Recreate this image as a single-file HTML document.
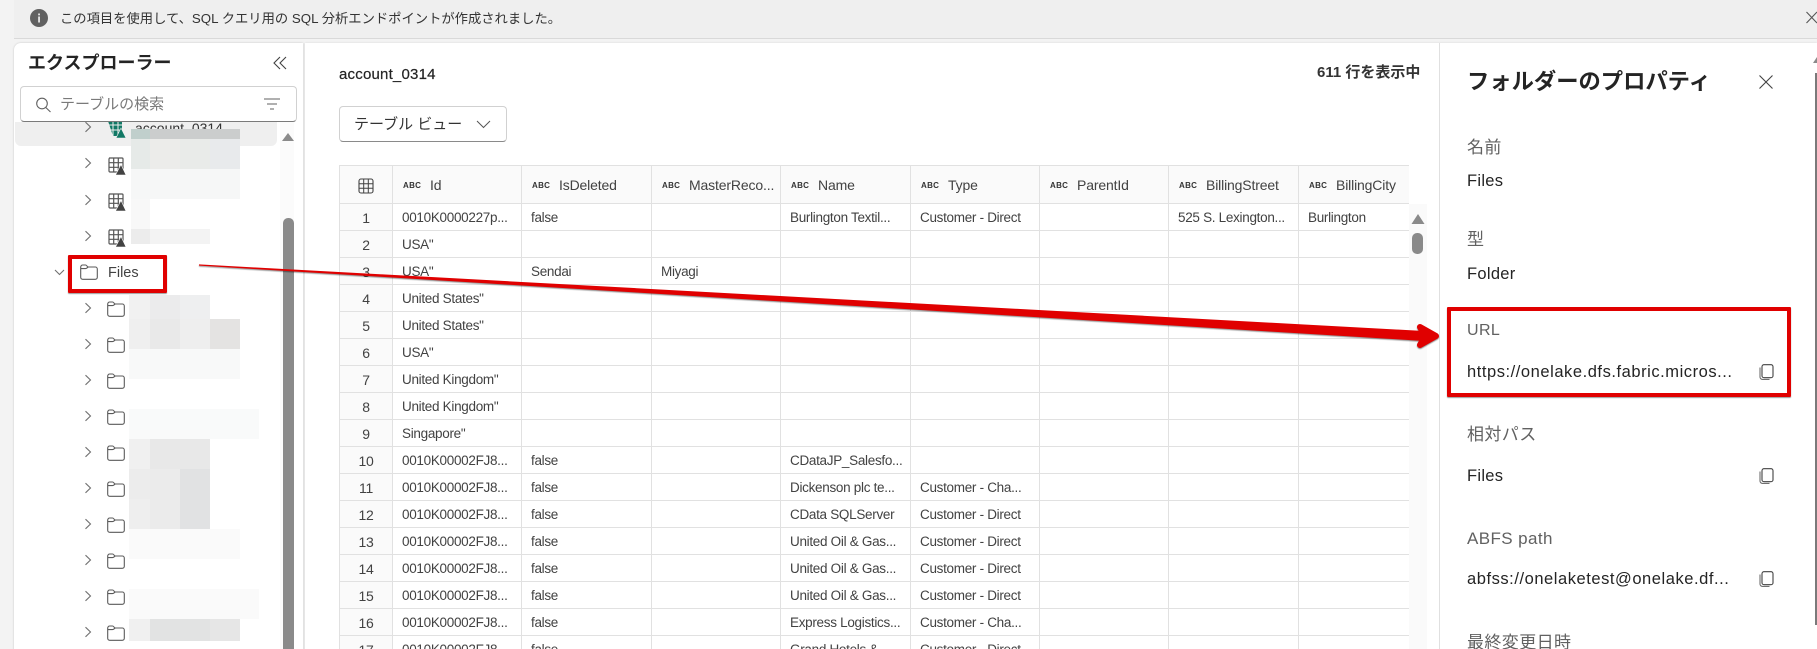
<!DOCTYPE html>
<html lang="ja"><head><meta charset="utf-8"><title>フォルダーのプロパティ</title>
<style>
html,body{margin:0;padding:0;width:1817px;height:649px;overflow:hidden}
#root{width:1817px;height:649px;position:relative;overflow:hidden;background:#f3f3f3;font-family:"Liberation Sans","Noto Sans CJK JP",sans-serif;color:#242424}
.a{position:absolute;white-space:nowrap}
#banner{left:14px;top:0;width:1803px;height:38px;background:#efefef;border-bottom:1px solid #d9d9d9}
#side{left:14px;top:43px;width:289px;height:620px;background:#fff;border-radius:7px 0 0 0;box-shadow:0 0 2px rgba(0,0,0,.18)}
#main{left:305px;top:43px;width:1512px;height:620px;background:#fff;box-shadow:0 0 2px rgba(0,0,0,.12)}
#search{left:20px;top:86px;width:275px;height:34px;background:#fff;border:1px solid #d1d1d1;border-bottom-color:#7a7a7a;border-radius:4px}
table{position:absolute;left:339px;top:165px;width:1069px;table-layout:fixed;border-collapse:collapse;font-size:13.5px;color:#424242;letter-spacing:-.3px}
th,td{border:1px solid #e1e1e1;padding:2px 0 0 9px;height:24px;line-height:24px;white-space:nowrap;overflow:hidden;text-align:left;font-weight:400}
tr:first-child th{height:35px;line-height:35px;background:#fafafa;padding:2px 0 0 10px;font-size:14px;letter-spacing:-.15px}
tr:first-child th:last-child,td:last-child{border-right:0}
td:first-child{background:#fafafa;text-align:center;padding:2px 0 0 0;font-size:14px}
th i{font:700 8px "Liberation Sans",sans-serif;letter-spacing:.3px;display:inline-block;width:27px;vertical-align:2px;color:#333}
.lb{font-size:17px;line-height:22px;letter-spacing:.4px;color:#616161;left:1467px}
.vl{font-size:16.5px;line-height:22px;letter-spacing:.3px;color:#242424;left:1467px}
</style></head><body><div id="root">
<svg width="0" height="0" style="position:absolute">
<symbol id="chev" viewBox="0 0 8 12"><path d="M1.5 1.2 6.5 6l-5 4.8" fill="none" stroke="#707070" stroke-width="1.1"/></symbol>
<symbol id="folder" viewBox="0 0 18 16"><path d="M.7 3A2 2 0 0 1 2.7 1H5.5C6.6 1 7 2.6 8.2 3H15.3A2 2 0 0 1 17.3 5V13.3A2 2 0 0 1 15.3 15.3H2.7A2 2 0 0 1 .7 13.3Z M.7 4.6H5.5C6.8 4.6 7.2 3.6 8.2 3" fill="none" stroke="#5a5a5a" stroke-width="1.1"/></symbol>
<symbol id="tbl" viewBox="0 0 18 18"><path d="M1.5 1H14a1 1 0 0 1 1 1V14a1 1 0 0 1-1 1H2A1 1 0 0 1 1 14V2ZM1 5.7H15M1 10.3H15M5.7 1V15M10.3 1V15" fill="none" stroke="#555" stroke-width="1.2"/><path d="M13 7.5 18 18H7.5Z" fill="#424242" stroke="#fff" stroke-width=".6"/></symbol>
<symbol id="copy" viewBox="0 0 15 16"><rect x="3" y=".7" width="11" height="13" rx="2" fill="none" stroke="#424242" stroke-width="1.1"/><path d="M1 3.5V13A2.4 2.4 0 0 0 3.4 15.4H10.5" fill="none" stroke="#707070" stroke-width="1.1"/></symbol>
</svg>

<div class="a" id="banner"></div>
<svg class="a" style="left:29px;top:8px" width="20" height="20"><circle cx="10" cy="10" r="9" fill="#616161"/><rect x="9.2" y="8.5" width="1.7" height="6" fill="#eee"/><rect x="9.2" y="5.5" width="1.7" height="1.8" fill="#eee"/></svg>
<div class="a" style="left:60px;top:10px;font-size:13.3px;line-height:18px;color:#333">この項目を使用して、SQL クエリ用の SQL 分析エンドポイントが作成されました。</div>
<svg class="a" style="left:1806px;top:11px" width="11" height="13"><path d="M.5 1 11 12M11 1 .5 12" stroke="#555" stroke-width="1.1"/></svg>

<div class="a" id="side"></div>
<div class="a" id="main"></div>

<!-- sidebar tree -->
<div class="a" style="left:15px;top:122px;width:262px;height:24px;background:#efefef;border-radius:0 0 6px 6px"></div>
<div class="a" style="left:280px;top:122px;width:14px;height:527px;background:#fbfbfb"></div>
<svg class="a" style="left:282px;top:132px" width="14" height="10"><path d="M6 1 12 9H0Z" fill="#8a8a8a"/></svg>
<div class="a" style="left:283px;top:218px;width:11px;height:431px;background:#8a8a8a;border-radius:5px 5px 0 0"></div>
<div class="a" style="left:135px;top:118px;font-size:14px;line-height:20px;color:#333">account_0314</div>

<svg class="a" style="left:0;top:0" width="300" height="649">
<path d="M108 121H122V136H113Z" fill="#117865"/><path d="M108 125H122M108 130H122M113 121V136M118 121V136" stroke="#efefef" stroke-width="1"/><path d="M121 128 126 138H116Z" fill="#117865" stroke="#efefef" stroke-width=".6"/>
<use href="#chev" x="84" y="121" width="8" height="12"/><use href="#chev" x="84" y="157" width="8" height="12"/><use href="#chev" x="84" y="194" width="8" height="12"/><use href="#chev" x="84" y="230" width="8" height="12"/>
<use href="#tbl" x="108" y="157" width="18" height="18"/><use href="#tbl" x="108" y="193" width="18" height="18"/><use href="#tbl" x="108" y="229" width="18" height="18"/>
<path d="M55 270 59.5 274.5 64 270" fill="none" stroke="#707070" stroke-width="1.1"/>
<use href="#folder" x="80" y="264" width="18" height="16"/>
<g id="fold">
<use href="#chev" x="84" y="302" width="8" height="12"/><use href="#folder" x="107" y="301" width="18" height="16"/>
<use href="#chev" x="84" y="338" width="8" height="12"/><use href="#folder" x="107" y="337" width="18" height="16"/>
<use href="#chev" x="84" y="374" width="8" height="12"/><use href="#folder" x="107" y="373" width="18" height="16"/>
<use href="#chev" x="84" y="410" width="8" height="12"/><use href="#folder" x="107" y="409" width="18" height="16"/>
<use href="#chev" x="84" y="446" width="8" height="12"/><use href="#folder" x="107" y="445" width="18" height="16"/>
<use href="#chev" x="84" y="482" width="8" height="12"/><use href="#folder" x="107" y="481" width="18" height="16"/>
<use href="#chev" x="84" y="518" width="8" height="12"/><use href="#folder" x="107" y="517" width="18" height="16"/>
<use href="#chev" x="84" y="554" width="8" height="12"/><use href="#folder" x="107" y="553" width="18" height="16"/>
<use href="#chev" x="84" y="590" width="8" height="12"/><use href="#folder" x="107" y="589" width="18" height="16"/>
<use href="#chev" x="84" y="626" width="8" height="12"/><use href="#folder" x="107" y="625" width="18" height="16"/>
</g>
<!-- mosaics -->
<rect x="131" y="129" width="19" height="10" fill="#c0cfcc"/><rect x="150" y="129" width="90" height="10" fill="#cbcdcd"/>
<rect x="131" y="139" width="19" height="30" fill="#e6eae8"/><rect x="150" y="139" width="30" height="30" fill="#ececea"/><rect x="180" y="139" width="30" height="30" fill="#e9ebe9"/><rect x="210" y="139" width="30" height="30" fill="#e8eaec"/>
<rect x="131" y="169" width="109" height="30" fill="#f6f7f7"/><rect x="131" y="199" width="19" height="30" fill="#f8f8f8"/>
<rect x="131" y="229" width="19" height="15" fill="#ececec"/><rect x="150" y="229" width="60" height="15" fill="#f3f3f3"/>
<rect x="129" y="295" width="21" height="24" fill="#f1f1f1"/><rect x="150" y="295" width="30" height="24" fill="#ebebec"/><rect x="180" y="295" width="30" height="24" fill="#eeeff0"/>
<rect x="129" y="319" width="21" height="30" fill="#efefef"/><rect x="150" y="319" width="30" height="30" fill="#e9e9e9"/><rect x="180" y="319" width="30" height="30" fill="#eeeeee"/><rect x="210" y="319" width="30" height="30" fill="#e4e3e2"/>
<rect x="129" y="349" width="111" height="30" fill="#f8f9f9"/>
<rect x="129" y="409" width="130" height="30" fill="#f9fafa"/>
<rect x="129" y="439" width="21" height="30" fill="#f0f0f0"/><rect x="150" y="439" width="60" height="30" fill="#e8e8e8"/>
<rect x="129" y="469" width="21" height="30" fill="#ececec"/><rect x="150" y="469" width="30" height="30" fill="#ebebeb"/><rect x="180" y="469" width="30" height="30" fill="#e1e2e3"/>
<rect x="129" y="499" width="21" height="30" fill="#eeeeee"/><rect x="150" y="499" width="30" height="30" fill="#ebebeb"/><rect x="180" y="499" width="30" height="30" fill="#e1e2e3"/>
<rect x="129" y="529" width="111" height="30" fill="#fafafa"/>
<rect x="129" y="589" width="130" height="30" fill="#fafafa"/>
<rect x="129" y="619" width="21" height="22" fill="#f0f0f0"/><rect x="150" y="619" width="60" height="22" fill="#e2e3e3"/><rect x="210" y="619" width="30" height="22" fill="#e6e6e6"/>
</svg>
<div class="a" style="left:108px;top:263px;font-size:14.5px;line-height:20px;color:#424242">Files</div>

<div class="a" style="left:28px;top:51px;font-size:18px;line-height:25px;font-weight:700;color:#242424">エクスプローラー</div>
<svg class="a" style="left:272px;top:55px" width="16" height="16"><path d="M8 2 2 8l6 6M14 2 8 8l6 6" fill="none" stroke="#424242" stroke-width="1.1"/></svg>
<div class="a" id="search"></div>
<svg class="a" style="left:35px;top:97px" width="17" height="16"><circle cx="7" cy="6.5" r="5.3" fill="none" stroke="#616161" stroke-width="1.1"/><path d="M10.8 10.5 15.5 15" stroke="#616161" stroke-width="1.1"/></svg>
<div class="a" style="left:60px;top:94px;font-size:15px;line-height:22px;color:#7a7a7a">テーブルの検索</div>
<svg class="a" style="left:264px;top:98px" width="17" height="12"><path d="M0 1H16M3 6H13M6 11H10" stroke="#616161" stroke-width="1.1"/></svg>

<!-- main -->
<div class="a" style="left:339px;top:65px;font-size:15px;line-height:20px;letter-spacing:.2px;color:#242424;-webkit-text-stroke:.2px #242424">account_0314</div>
<div class="a" style="left:1317px;top:63px;font-size:15px;line-height:20px;font-weight:700;color:#333">611 行を表示中</div>
<div class="a" style="left:339px;top:106px;width:166px;height:34px;border:1px solid #d1d1d1;border-bottom-color:#8a8a8a;border-radius:4px;background:#fff"></div>
<div class="a" style="left:354px;top:114px;font-size:15px;line-height:22px;color:#333">テーブル ビュー</div>
<svg class="a" style="left:476px;top:120px" width="15" height="9"><path d="M1 1 7.5 7.5 14 1" fill="none" stroke="#555" stroke-width="1"/></svg>

<table>
<colgroup><col style="width:53px"><col style="width:129px"><col style="width:130px"><col style="width:129px"><col style="width:130px"><col style="width:129px"><col style="width:129px"><col style="width:130px"><col style="width:110px"></colgroup>
<tr><th></th><th><i>ABC</i>Id</th><th><i>ABC</i>IsDeleted</th><th><i>ABC</i>MasterReco...</th><th><i>ABC</i>Name</th><th><i>ABC</i>Type</th><th><i>ABC</i>ParentId</th><th><i>ABC</i>BillingStreet</th><th><i>ABC</i>BillingCity</th></tr>
<tr><td>1</td><td>0010K0000227p...</td><td>false</td><td></td><td>Burlington Textil...</td><td>Customer - Direct</td><td></td><td>525 S. Lexington...</td><td>Burlington</td></tr>
<tr><td>2</td><td>USA"</td><td></td><td></td><td></td><td></td><td></td><td></td><td></td></tr>
<tr><td>3</td><td>USA"</td><td>Sendai</td><td>Miyagi</td><td></td><td></td><td></td><td></td><td></td></tr>
<tr><td>4</td><td>United States"</td><td></td><td></td><td></td><td></td><td></td><td></td><td></td></tr>
<tr><td>5</td><td>United States"</td><td></td><td></td><td></td><td></td><td></td><td></td><td></td></tr>
<tr><td>6</td><td>USA"</td><td></td><td></td><td></td><td></td><td></td><td></td><td></td></tr>
<tr><td>7</td><td>United Kingdom"</td><td></td><td></td><td></td><td></td><td></td><td></td><td></td></tr>
<tr><td>8</td><td>United Kingdom"</td><td></td><td></td><td></td><td></td><td></td><td></td><td></td></tr>
<tr><td>9</td><td>Singapore"</td><td></td><td></td><td></td><td></td><td></td><td></td><td></td></tr>
<tr><td>10</td><td>0010K00002FJ8...</td><td>false</td><td></td><td>CDataJP_Salesfo...</td><td></td><td></td><td></td><td></td></tr>
<tr><td>11</td><td>0010K00002FJ8...</td><td>false</td><td></td><td>Dickenson plc te...</td><td>Customer - Cha...</td><td></td><td></td><td></td></tr>
<tr><td>12</td><td>0010K00002FJ8...</td><td>false</td><td></td><td>CData SQLServer</td><td>Customer - Direct</td><td></td><td></td><td></td></tr>
<tr><td>13</td><td>0010K00002FJ8...</td><td>false</td><td></td><td>United Oil &amp; Gas...</td><td>Customer - Direct</td><td></td><td></td><td></td></tr>
<tr><td>14</td><td>0010K00002FJ8...</td><td>false</td><td></td><td>United Oil &amp; Gas...</td><td>Customer - Direct</td><td></td><td></td><td></td></tr>
<tr><td>15</td><td>0010K00002FJ8...</td><td>false</td><td></td><td>United Oil &amp; Gas...</td><td>Customer - Direct</td><td></td><td></td><td></td></tr>
<tr><td>16</td><td>0010K00002FJ8...</td><td>false</td><td></td><td>Express Logistics...</td><td>Customer - Cha...</td><td></td><td></td><td></td></tr>
<tr><td>17</td><td>0010K00002FJ8...</td><td>false</td><td></td><td>Grand Hotels &amp;...</td><td>Customer - Direct</td><td></td><td></td><td></td></tr>
</table>
<svg class="a" style="left:358px;top:178px" width="16" height="16"><rect x="1" y="1" width="14" height="14" rx="2" fill="none" stroke="#424242" stroke-width="1.1"/><path d="M1 5.7H15M1 10.3H15M5.7 1V15M10.3 1V15" stroke="#424242" stroke-width="1"/></svg>
<div class="a" style="left:1409px;top:204px;width:18px;height:445px;background:#fafafa"></div>
<svg class="a" style="left:1411px;top:213px" width="14" height="12"><path d="M7 1 13.5 11H.5Z" fill="#8a8a8a"/></svg>
<div class="a" style="left:1412px;top:233px;width:11px;height:21px;background:#8a8a8a;border-radius:5px"></div>

<!-- right panel -->
<div class="a" style="left:1439px;top:43px;width:376px;height:620px;background:#fff;border-left:1px solid #e0e0e0"></div>
<div class="a" style="left:1467px;top:67px;font-size:22.3px;line-height:30px;font-weight:700;color:#242424">フォルダーのプロパティ</div>
<svg class="a" style="left:1758px;top:74px" width="16" height="16"><path d="M1.5 1.5 14.5 14.5M14.5 1.5 1.5 14.5" stroke="#424242" stroke-width="1.1"/></svg>
<div class="a lb" style="top:137px">名前</div>
<div class="a vl" style="top:170px">Files</div>
<div class="a lb" style="top:229px">型</div>
<div class="a vl" style="top:263px">Folder</div>
<div class="a lb" style="top:320px;font-size:16px">URL</div>
<div class="a vl" style="top:361px;letter-spacing:.55px">https://onelake.dfs.fabric.micros...</div>
<div class="a lb" style="top:424px">相対パス</div>
<div class="a vl" style="top:465px">Files</div>
<div class="a lb" style="top:528px">ABFS path</div>
<div class="a vl" style="top:568px;letter-spacing:.55px">abfss://onelaketest@onelake.df...</div>
<div class="a lb" style="top:632px">最終変更日時</div>
<svg class="a" style="left:1759px;top:364px" width="15" height="16"><use href="#copy" width="15" height="16"/></svg>
<svg class="a" style="left:1759px;top:468px" width="15" height="16"><use href="#copy" width="15" height="16"/></svg>
<svg class="a" style="left:1759px;top:571px" width="15" height="16"><use href="#copy" width="15" height="16"/></svg>
<div class="a" style="left:1815px;top:73px;width:2px;height:552px;background:#7a7a7a"></div>
<svg class="a" style="left:1813px;top:57px" width="4" height="6"><path d="M4 0V6H0Z" fill="#8a8a8a"/></svg>

<!-- annotations -->
<div class="a" style="left:68px;top:255px;width:91px;height:30px;border:4px solid #e00000;border-radius:1px;box-shadow:0 1px 1px rgba(0,0,0,.4)"></div>
<div class="a" style="left:1447px;top:307px;width:336px;height:82px;border:4px solid #e00000;border-radius:1px;box-shadow:0 1px 1px rgba(0,0,0,.4)"></div>
<svg class="a" style="left:0;top:0;filter:drop-shadow(0 1px .6px rgba(0,0,0,.45))" width="1817" height="649">
<path d="M199 264.4 1424 331 1424 341 199 265.6Z" fill="#e00000"/>
<path d="M1420 327 1436 336 1420 345 1425 336Z" fill="#e00000" stroke="#e00000" stroke-width="6" stroke-linejoin="round"/>
</svg>
</div></body></html>
